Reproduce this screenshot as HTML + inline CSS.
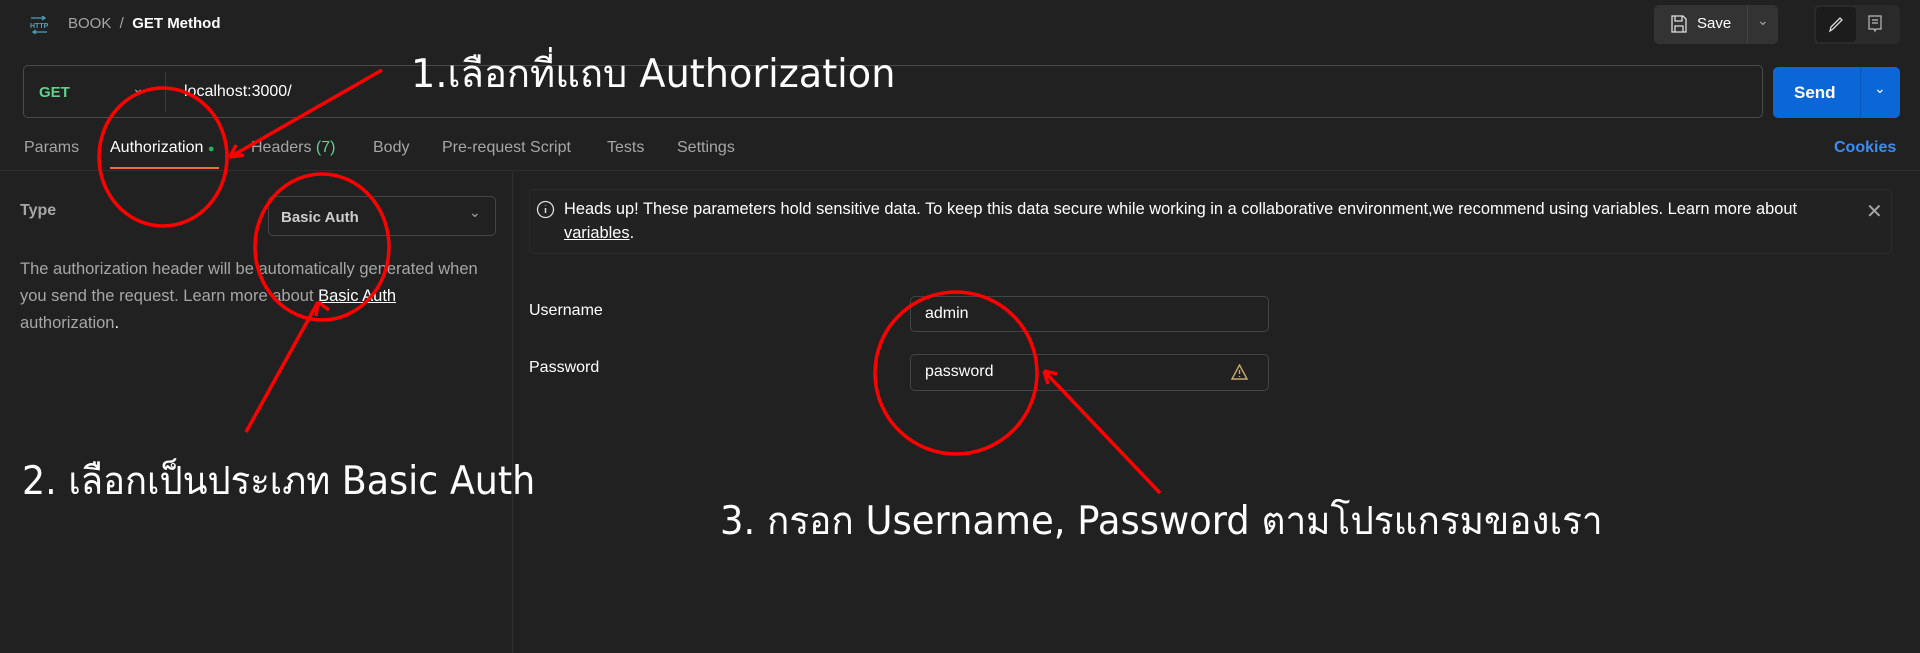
<!DOCTYPE html>
<html><head><meta charset="utf-8"><style>
*{box-sizing:border-box;margin:0;padding:0}
body{width:1920px;height:653px;background:#212121;font-family:"Liberation Sans",sans-serif;color:#e6e6e6;position:relative;overflow:hidden}
.a{position:absolute;white-space:nowrap}
.muted{color:#a6a6a6}
.box{position:absolute;border:1.5px solid #444;border-radius:5px}
.th{font-family:"DejaVu Sans","Liberation Sans",sans-serif;color:#fff;font-size:39px;position:absolute;white-space:nowrap;transform-origin:0 0}
</style></head><body>
<!-- top bar -->
<svg class="a" style="left:29px;top:16px" width="20" height="18" viewBox="0 0 20 18"><path d="M2 2h14M13 0l3 2-3 2M18 16H4M7 14l-3 2 3 2" stroke="#4aa3b8" stroke-width="1.3" fill="none"/><text x="1" y="12" font-size="7" fill="#4aa3b8" font-family="Liberation Sans" font-weight="bold">HTTP</text></svg>
<div class="a muted" style="left:68px;top:15px;font-size:15px">BOOK &nbsp;/&nbsp; <b style="color:#fff">GET Method</b></div>
<div class="a" style="left:1654px;top:5px;width:124px;height:39px;background:#333;border-radius:5px"></div>
<div class="a" style="left:1747px;top:5px;width:1px;height:39px;background:#444"></div>
<svg class="a" style="left:1670px;top:14px" width="18" height="20" viewBox="0 0 18 20"><path d="M2 2h11l3 3v13H2z M5 2v5h7V2 M5 18v-6h8v6" stroke="#ddd" stroke-width="1.3" fill="none"/></svg>
<div class="a" style="left:1697px;top:15px;font-size:15px;color:#fff">Save</div>
<div class="a muted" style="left:1757px;top:12px;font-size:14px">&#8964;</div>
<div class="a" style="left:1814px;top:5px;width:86px;height:39px;background:#2a2a2a;border-radius:5px"></div>
<div class="a" style="left:1816px;top:7px;width:40px;height:35px;background:#1c1c1c;border-radius:4px"></div>
<svg class="a" style="left:1826px;top:14px" width="20" height="20" viewBox="0 0 20 20"><path d="M4 17l1-4L14 4l2 2-9 9z" stroke="#ddd" stroke-width="1.3" fill="none"/></svg>
<svg class="a" style="left:1866px;top:14px" width="18" height="20" viewBox="0 0 18 20"><path d="M3 2h12v13H10l-1 2-1-2H3z M6 6h6M6 9h6" stroke="#bbb" stroke-width="1.2" fill="none"/></svg>
<!-- url bar -->
<div class="box" style="left:23px;top:65px;width:1740px;height:53px;border-color:#4a4a4a"></div>
<div class="a" style="left:39px;top:84px;font-size:15px;font-weight:bold;color:#5fd18b">GET</div>
<div class="a muted" style="left:132px;top:80px;font-size:14px">&#8964;</div>
<div class="a" style="left:165px;top:72px;width:1px;height:40px;background:#3a3a3a"></div>
<div class="a" style="left:184px;top:83px;font-size:16px;color:#fff">localhost:3000/</div>
<div class="a" style="left:1773px;top:67px;width:127px;height:51px;background:#0b66d8;border-radius:5px"></div>
<div class="a" style="left:1860px;top:67px;width:1px;height:51px;background:#0a55b8"></div>
<div class="a" style="left:1794px;top:83px;font-size:17px;font-weight:bold;color:#fff">Send</div>
<div class="a" style="left:1874px;top:80px;font-size:14px;color:#fff">&#8964;</div>
<!-- tabs -->
<div class="a muted" style="left:24px;top:139px;font-size:16px">Params</div>
<div class="a" style="left:110px;top:139px;font-size:16px;color:#fff">Authorization <span style="color:#22b35e;font-size:11px">&#9679;</span></div>
<div class="a" style="left:110px;top:167px;width:109px;height:2px;background:#f26b3a"></div>
<div class="a muted" style="left:251px;top:139px;font-size:16px">Headers <span style="color:#5fd18b">(7)</span></div>
<div class="a muted" style="left:373px;top:139px;font-size:16px">Body</div>
<div class="a muted" style="left:442px;top:139px;font-size:16px">Pre-request Script</div>
<div class="a muted" style="left:607px;top:139px;font-size:16px">Tests</div>
<div class="a muted" style="left:677px;top:139px;font-size:16px">Settings</div>
<div class="a" style="left:1834px;top:139px;font-size:16px;font-weight:bold;color:#3d8df5">Cookies</div>
<div class="a" style="left:0;top:170px;width:1920px;height:1px;background:#2f2f2f"></div>
<div class="a" style="left:512px;top:170px;width:1px;height:483px;background:#2f2f2f"></div>
<!-- left pane -->
<div class="a muted" style="left:20px;top:202px;font-size:16px;font-weight:bold">Type</div>
<div class="box" style="left:268px;top:196px;width:228px;height:40px"></div>
<div class="a" style="left:281px;top:209px;font-size:15px;font-weight:bold;color:#ccc">Basic Auth</div>
<div class="a muted" style="left:469px;top:204px;font-size:14px">&#8964;</div>
<div class="a muted" style="left:20px;top:256px;font-size:16.5px;line-height:27px;white-space:normal;width:470px">The authorization header will be automatically generated when you send the request. Learn more about <u style="color:#fff">Basic Auth</u> authorization<span style="color:#fff">.</span></div>
<!-- banner -->
<div class="a" style="left:529px;top:189px;width:1363px;height:65px;border:1px solid #2c2c2c;border-radius:4px;background:#222"></div>
<svg class="a" style="left:536px;top:200px" width="19" height="19" viewBox="0 0 19 19"><circle cx="9.5" cy="9.5" r="8" stroke="#ddd" stroke-width="1.3" fill="none"/><path d="M9.5 8v5M9.5 5.5v.5" stroke="#ddd" stroke-width="1.5"/></svg>
<div class="a" style="left:564px;top:200px;font-size:16.4px;color:#fff">Heads up! These parameters hold sensitive data. To keep this data secure while working in a collaborative environment,we recommend using variables. Learn more about</div>
<div class="a" style="left:564px;top:224px;font-size:16.4px;color:#fff"><u>variables</u>.</div>
<div class="a muted" style="left:1866px;top:199px;font-size:20px">&#10005;</div>
<!-- fields -->
<div class="a" style="left:529px;top:302px;font-size:16px;color:#fff">Username</div>
<div class="box" style="left:910px;top:296px;width:359px;height:36px"></div>
<div class="a" style="left:925px;top:305px;font-size:16px;color:#fff">admin</div>
<div class="a" style="left:529px;top:359px;font-size:16px;color:#fff">Password</div>
<div class="box" style="left:910px;top:354px;width:359px;height:37px"></div>
<div class="a" style="left:925px;top:363px;font-size:16px;color:#fff">password</div>
<svg class="a" style="left:1231px;top:364px" width="17" height="16" viewBox="0 0 17 16"><path d="M8.5 1L16 15H1z M8.5 6v4M8.5 12v1" stroke="#c9a86a" stroke-width="1.4" fill="none"/></svg>
<!-- annotations -->
<svg class="a" style="left:0;top:0" width="1920" height="653">
<g stroke="#f00" stroke-width="3.5" fill="none">
<ellipse cx="163" cy="157" rx="64" ry="69"/>
<ellipse cx="322" cy="247" rx="67" ry="73"/>
<ellipse cx="956" cy="373" rx="81" ry="81"/>
<path d="M382 70L230 157M230 157l14-2M230 157l6-12"/>
<path d="M246 432L318 302M318 302l-2 14M318 302l11 8"/>
<path d="M1160 493L1044 371M1044 371l4 13M1044 371l13 3"/>
</g></svg>
<div class="th" style="left:411px;top:43px;transform:scaleX(0.98)">1.เลือกที่แถบ Authorization</div>
<div class="th" style="left:22px;top:450px;transform:scaleX(0.934)">2. เลือกเป็นประเภท Basic Auth</div>
<div class="th" style="left:720px;top:490px;transform:scaleX(0.947)">3. กรอก Username, Password ตามโปรแกรมของเรา</div>
</body></html>
